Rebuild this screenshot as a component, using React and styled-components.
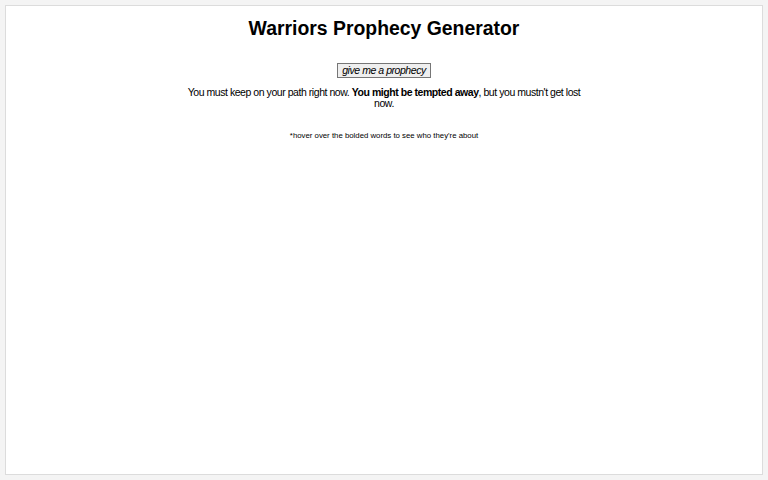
import React from "react";
import styled, { createGlobalStyle } from "styled-components";

const Global = createGlobalStyle`
  html, body { margin: 0; padding: 0; }
  body {
    background: #f4f4f4;
    font-family: "Liberation Sans", Arial, sans-serif;
    color: #000;
  }
`;

const Page = styled.div`
  padding: 5px;
  height: 480px;
  box-sizing: border-box;
`;

const Card = styled.main`
  height: 100%;
  box-sizing: border-box;
  background: #fff;
  border: 1px solid #dcdcdc;
  display: flex;
  flex-direction: column;
  align-items: center;
  padding-top: 11px;
`;

const Title = styled.h1`
  margin: 0;
  font-size: 19.4px;
  line-height: 22px;
  font-weight: bold;
`;

const Trigger = styled.button`
  margin-top: 24px;
  font-family: "Liberation Sans", Arial, sans-serif;
  font-style: italic;
  font-size: 10.5px;
  letter-spacing: -0.45px;
  line-height: 13px;
  padding: 0 4px;
  background: #efefef;
  border: 1px solid #767676;
  border-radius: 0;
  color: #000;
`;

const Prophecy = styled.p`
  margin: 9px 0 0;
  max-width: 400px;
  text-align: center;
  font-size: 10.5px;
  letter-spacing: -0.45px;
  line-height: 11px;
`;

const Note = styled.p`
  margin: 22px 0 0;
  font-size: 7.8px;
  line-height: 10px;
  text-align: center;
`;

export default function App() {
  return (
    <>
      <Global />
      <Page>
        <Card>
          <Title>Warriors Prophecy Generator</Title>
          <Trigger>give me a prophecy</Trigger>
          <Prophecy>
            You must keep on your path right now. <b>You might be tempted away</b>, but you mustn't get lost now.
          </Prophecy>
          <Note>*hover over the bolded words to see who they're about</Note>
        </Card>
      </Page>
    </>
  );
}
